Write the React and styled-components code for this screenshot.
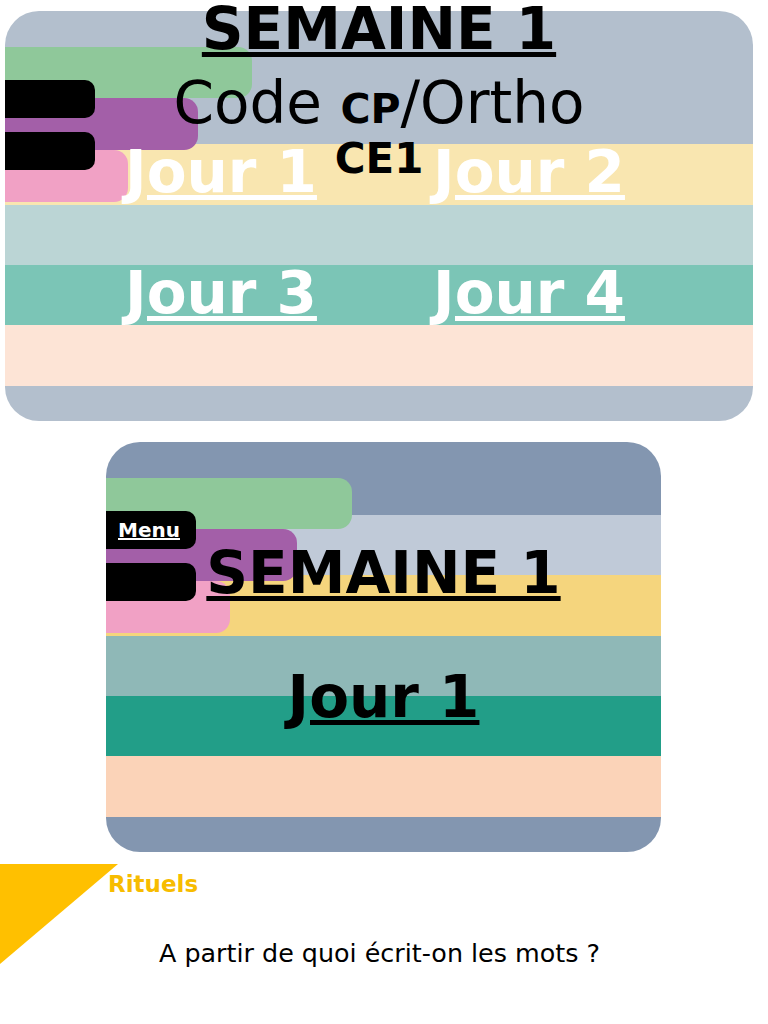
import React from 'react';
import styled, { createGlobalStyle } from 'styled-components';

const GlobalStyle = createGlobalStyle`
    body{
        margin: 0;
        background: #ffffff;
        font-family: "DejaVu Sans", "Liberation Sans", sans-serif;
    }
`;

const card1Bands = [
    { h: 133, c: 'transparent' },
    { h: 61, c: '#f9e6b0' },
    { h: 60, c: '#bbd5d5' },
    { h: 60, c: '#7bc5b6' },
    { h: 61, c: '#fde4d6' },
    { h: 35, c: 'transparent' },
];

const card2Bands = [
    { h: 73, c: 'transparent' },
    { h: 60, c: '#c0cad8' },
    { h: 61, c: '#f5d57d' },
    { h: 60, c: '#8fb8b7' },
    { h: 60, c: '#229e88' },
    { h: 61, c: '#fbd3b8' },
    { h: 35, c: 'transparent' },
];

export default function App() {
    return <Page>
        <GlobalStyle />
        <Card $bg="#b3bfcd" $width={748} $ml={5} $mt={11}>
            <Stripes>
                {card1Bands.map((b, i) => <Band key={i} $h={b.h} $c={b.c} />)}
            </Stripes>
            <SideTabs widths={[247, 193, 123]} />
            <Pills>
                <Pill />
                <Pill />
            </Pills>
            <TitleBlock>
                <Title>SEMAINE 1</Title>
                <Subtitle>Code <small>CP</small>/Ortho</Subtitle>
                <Level>CE1</Level>
            </TitleBlock>
            <Days>
                <Day>Jour 1</Day>
                <Day>Jour 2</Day>
                <span />
                <span />
                <Day>Jour 3</Day>
                <Day>Jour 4</Day>
            </Days>
        </Card>

        <Card $bg="#8396b0" $width={555} $ml={106} $mt={21}>
            <Stripes>
                {card2Bands.map((b, i) => <Band key={i} $h={b.h} $c={b.c} />)}
            </Stripes>
            <SideTabs widths={[246, 191, 124]} />
            <Pills>
                <Pill><MenuLink>Menu</MenuLink></Pill>
                <Pill />
            </Pills>
            <DayView>
                <Title>SEMAINE 1</Title>
                <DayTitle>Jour 1</DayTitle>
            </DayView>
        </Card>

        <Rituals>
            <Corner />
            <RitualText>
                <Label>Rituels</Label>
                <Question>A partir de quoi écrit-on les mots ?</Question>
            </RitualText>
        </Rituals>
    </Page>;
}

function SideTabs({ widths }) {
    const colors = ['#8fc89a', '#a35fa8', '#f1a1c5'];
    const heights = [51, 52, 52];
    return <Tabs>
        {widths.map((w, i) => <Tab key={i} $w={w} $h={heights[i]} $c={colors[i]} />)}
    </Tabs>;
}

const Page = styled.div`
    display: flex;
    flex-direction: column;
    width: 768px;
`;

const Card = styled.div`
    display: grid;
    width: ${p => p.$width}px;
    margin: ${p => p.$mt}px 0 0 ${p => p.$ml}px;
    background: ${p => p.$bg};
    border-radius: 34px;
    & > *{
        grid-area: 1 / 1;
    }
`;

const Stripes = styled.div`
    display: flex;
    flex-direction: column;
`;

const Band = styled.div`
    height: ${p => p.$h}px;
    background: ${p => p.$c};
`;

const Tabs = styled.div`
    display: flex;
    flex-direction: column;
    align-items: flex-start;
    align-self: start;
    padding-top: 36px;
`;

const Tab = styled.div`
    width: ${p => p.$w}px;
    height: ${p => p.$h}px;
    background: ${p => p.$c};
    border-radius: 0 14px 14px 0;
`;

const Pills = styled.div`
    display: flex;
    flex-direction: column;
    align-items: flex-start;
    align-self: start;
    gap: 14px;
    padding-top: 69px;
`;

const Pill = styled.div`
    display: flex;
    align-items: center;
    justify-content: center;
    width: 90px;
    height: 38px;
    background: #000000;
    border-radius: 0 10px 10px 0;
`;

const MenuLink = styled.span`
    color: #ffffff;
    font-weight: bold;
    font-size: 20px;
    text-decoration: underline;
    margin-right: 4px;
`;

const TitleBlock = styled.div`
    display: flex;
    flex-direction: column;
    align-items: center;
    align-self: start;
    margin-top: -11px;
    color: #000000;
`;

const Title = styled.div`
    font-size: 58px;
    line-height: 58px;
    font-weight: bold;
    text-decoration: underline;
    white-space: nowrap;
`;

const Subtitle = styled.div`
    margin-top: 10px;
    font-size: 58px;
    line-height: 70px;
    white-space: nowrap;
    small{
        font-size: 41px;
        font-weight: bold;
    }
`;

const Level = styled.div`
    margin-top: -6px;
    font-size: 42px;
    line-height: 42px;
    font-weight: bold;
`;

const Days = styled.div`
    display: grid;
    align-self: start;
    grid-template-columns: 308px 308px;
    grid-template-rows: 61px 60px 60px;
    margin-top: 133px;
    padding-left: 62px;
`;

const Day = styled.div`
    align-self: start;
    text-align: center;
    font-size: 58px;
    line-height: 56px;
    font-weight: bold;
    color: #ffffff;
    text-decoration: underline;
`;

const DayView = styled.div`
    display: flex;
    flex-direction: column;
    align-items: center;
    align-self: start;
    padding-top: 102px;
    color: #000000;
`;

const DayTitle = styled(Title)`
    margin-top: 66px;
`;

const Rituals = styled.section`
    display: grid;
    margin-top: 12px;
    height: 160px;
    & > *{
        grid-area: 1 / 1;
    }
`;

const Corner = styled.div`
    align-self: start;
    width: 118px;
    height: 100px;
    background: #ffc000;
    clip-path: polygon(0 0, 100% 0, 0 100%);
`;

const RitualText = styled.div`
    display: flex;
    flex-direction: column;
    align-self: start;
`;

const Label = styled.div`
    margin-top: 9px;
    padding-left: 108px;
    font-size: 23px;
    line-height: 23px;
    font-weight: bold;
    color: #f7bc00;
`;

const Question = styled.div`
    margin-top: 45px;
    padding-right: 9px;
    text-align: center;
    font-size: 25.4px;
    line-height: 25px;
    color: #000000;
`;
